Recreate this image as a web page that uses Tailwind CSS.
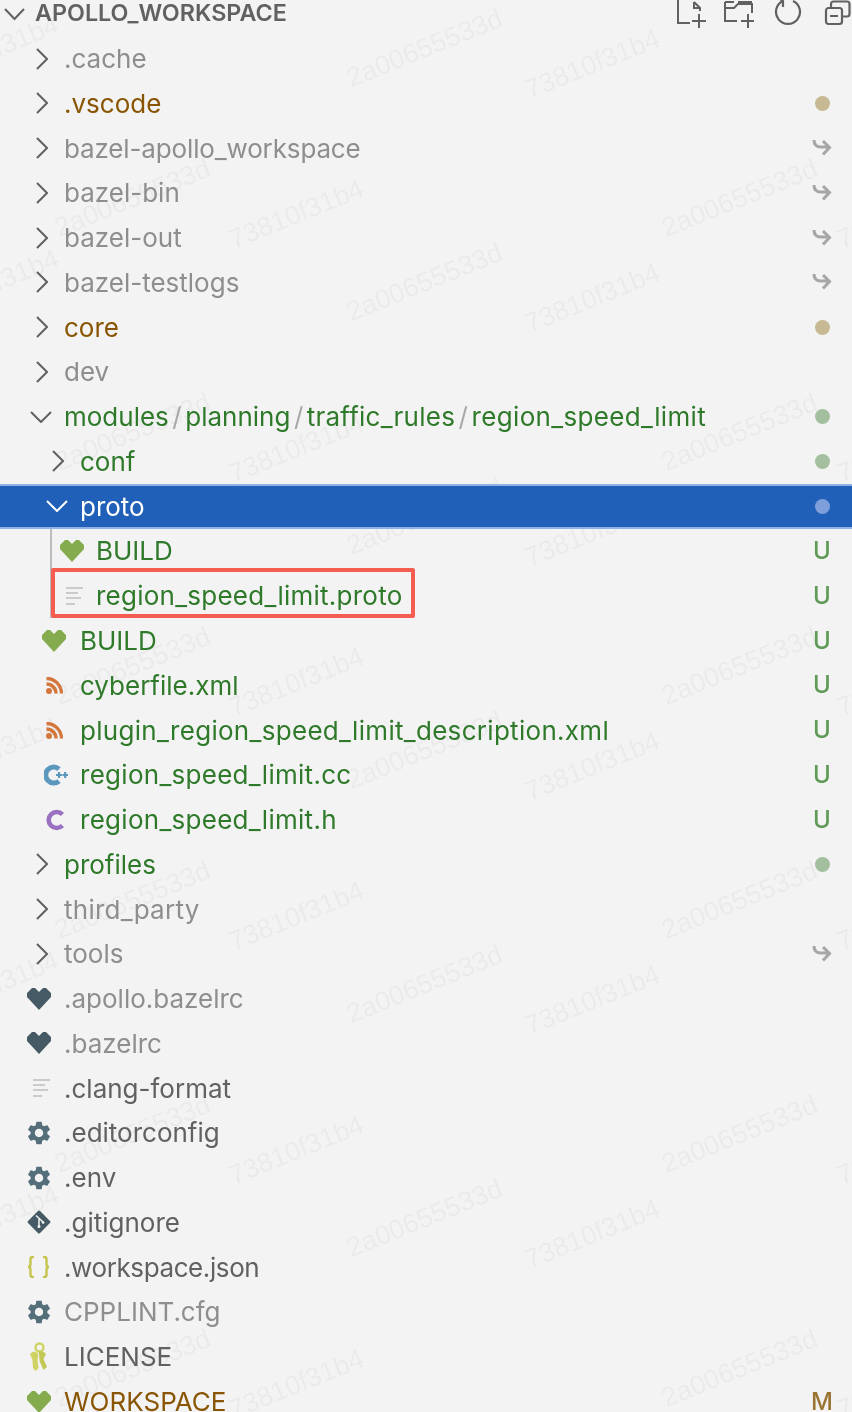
<!doctype html>
<html>
<head>
<meta charset="utf-8">
<script src="https://cdn.jsdelivr.net/npm/@tailwindcss/browser@4"></script>
</head>
<body class="bg-[#f3f3f3]">
<div class="relative w-[852px] h-[1412px] overflow-hidden bg-[#f3f3f3] font-['Inter',sans-serif] text-[26px] text-[#616161] blur-[0.5px]">

  <!-- watermark -->
  <div class="absolute inset-0 font-['Liberation_Sans',sans-serif] text-[27px] text-black/[0.035] whitespace-nowrap">
    <span class="absolute left-[-80px] top-[30px] -rotate-[22deg]">73810f31b4</span>
    <span class="absolute left-[342px] top-[28px] -rotate-[22deg]">2a00655533d</span>
    <span class="absolute left-[521px] top-[44px] -rotate-[22deg]">73810f31b4</span>
    <span class="absolute left-[50px] top-[178px] -rotate-[22deg]">2a00655533d</span>
    <span class="absolute left-[225px] top-[194px] -rotate-[22deg]">73810f31b4</span>
    <span class="absolute left-[657px] top-[178px] -rotate-[22deg]">2a00655533d</span>
    <span class="absolute left-[833px] top-[194px] -rotate-[22deg]">73810f31b4</span>
    <span class="absolute left-[-80px] top-[264px] -rotate-[22deg]">73810f31b4</span>
    <span class="absolute left-[342px] top-[262px] -rotate-[22deg]">2a00655533d</span>
    <span class="absolute left-[521px] top-[278px] -rotate-[22deg]">73810f31b4</span>
    <span class="absolute left-[50px] top-[412px] -rotate-[22deg]">2a00655533d</span>
    <span class="absolute left-[225px] top-[428px] -rotate-[22deg]">73810f31b4</span>
    <span class="absolute left-[657px] top-[412px] -rotate-[22deg]">2a00655533d</span>
    <span class="absolute left-[833px] top-[428px] -rotate-[22deg]">73810f31b4</span>
    <span class="absolute left-[-80px] top-[498px] -rotate-[22deg]">73810f31b4</span>
    <span class="absolute left-[342px] top-[496px] -rotate-[22deg]">2a00655533d</span>
    <span class="absolute left-[521px] top-[512px] -rotate-[22deg]">73810f31b4</span>
    <span class="absolute left-[50px] top-[646px] -rotate-[22deg]">2a00655533d</span>
    <span class="absolute left-[225px] top-[662px] -rotate-[22deg]">73810f31b4</span>
    <span class="absolute left-[657px] top-[646px] -rotate-[22deg]">2a00655533d</span>
    <span class="absolute left-[833px] top-[662px] -rotate-[22deg]">73810f31b4</span>
    <span class="absolute left-[-80px] top-[732px] -rotate-[22deg]">73810f31b4</span>
    <span class="absolute left-[342px] top-[730px] -rotate-[22deg]">2a00655533d</span>
    <span class="absolute left-[521px] top-[746px] -rotate-[22deg]">73810f31b4</span>
    <span class="absolute left-[50px] top-[880px] -rotate-[22deg]">2a00655533d</span>
    <span class="absolute left-[225px] top-[896px] -rotate-[22deg]">73810f31b4</span>
    <span class="absolute left-[657px] top-[880px] -rotate-[22deg]">2a00655533d</span>
    <span class="absolute left-[833px] top-[896px] -rotate-[22deg]">73810f31b4</span>
    <span class="absolute left-[-80px] top-[966px] -rotate-[22deg]">73810f31b4</span>
    <span class="absolute left-[342px] top-[964px] -rotate-[22deg]">2a00655533d</span>
    <span class="absolute left-[521px] top-[980px] -rotate-[22deg]">73810f31b4</span>
    <span class="absolute left-[50px] top-[1114px] -rotate-[22deg]">2a00655533d</span>
    <span class="absolute left-[225px] top-[1130px] -rotate-[22deg]">73810f31b4</span>
    <span class="absolute left-[657px] top-[1114px] -rotate-[22deg]">2a00655533d</span>
    <span class="absolute left-[833px] top-[1130px] -rotate-[22deg]">73810f31b4</span>
    <span class="absolute left-[-80px] top-[1200px] -rotate-[22deg]">73810f31b4</span>
    <span class="absolute left-[342px] top-[1198px] -rotate-[22deg]">2a00655533d</span>
    <span class="absolute left-[521px] top-[1214px] -rotate-[22deg]">73810f31b4</span>
    <span class="absolute left-[50px] top-[1348px] -rotate-[22deg]">2a00655533d</span>
    <span class="absolute left-[225px] top-[1364px] -rotate-[22deg]">73810f31b4</span>
    <span class="absolute left-[657px] top-[1348px] -rotate-[22deg]">2a00655533d</span>
    <span class="absolute left-[833px] top-[1364px] -rotate-[22deg]">73810f31b4</span>
  </div>

  <div class="relative flex flex-col mt-[-8.6px]">
    <!-- header -->
    <div class="flex items-center h-[44.77px] shrink-0 pl-[4px]">
      <svg class="w-[31px] h-[14px] shrink-0" viewBox="0 0 31 14"><path d="M1 2 L10.5 12 L20 2" fill="none" stroke="#616161" stroke-width="2"/></svg>
      <span class="font-semibold text-[23.3px]">APOLLO_WORKSPACE</span>
      <div class="ml-auto flex items-center">
        <svg class="w-[30px] h-[30px]" viewBox="0 0 30 30" fill="none" stroke="#616161" stroke-width="2"><path d="M1 0 V24 H13 M17 3 V9 H23 M17 3 L23 9 V12 M15 22 H29 M22 15 V29"/></svg>
        <svg class="w-[30px] h-[30px] ml-[17px]" viewBox="0 0 30 30" fill="none" stroke="#616161" stroke-width="2"><path d="M1 3 V22 H13 M1 9 H10 L14 5 H28 V14 M1 3 H10 M14 3 H28 M17 22 H31 M24 15 V29"/></svg>
        <svg class="w-[30px] h-[30px] ml-[18px]" viewBox="0 0 30 30" fill="none" stroke="#616161" stroke-width="2.2"><path d="M11 2 A12 12 0 1 0 21 2 M5 -2 L11 2 L11 8" /></svg>
        <svg class="w-[30px] h-[30px] ml-[20px]" viewBox="0 0 30 30" fill="none" stroke="#616161" stroke-width="2.2"><rect x="4" y="9" width="16" height="16" rx="2.5"/><path d="M9 9 V5 A2.5 2.5 0 0 1 11.5 2.5 H25 A2.5 2.5 0 0 1 27.5 5 V15 A2.5 2.5 0 0 1 25 17.5 H20 M8 17 H16"/></svg>
      </div>
    </div>

    <div class="flex items-center h-[44.77px] shrink-0 pl-[28px] text-[#8e8e8e]">
      <div class="w-[36px] pl-[8px]"><svg class="w-[12px] h-[22px]" viewBox="0 0 12 22"><path d="M1 1 L11 11 L1 21" fill="none" stroke="#616161" stroke-width="2"/></svg></div><span>.cache</span>
    </div>
    <div class="flex items-center h-[44.77px] shrink-0 pl-[28px] text-[#895503]">
      <div class="w-[36px] pl-[8px]"><svg class="w-[12px] h-[22px]" viewBox="0 0 12 22"><path d="M1 1 L11 11 L1 21" fill="none" stroke="#616161" stroke-width="2"/></svg></div><span>.vscode</span>
      <div class="ml-auto w-[60px] flex justify-center"><div class="w-[15px] h-[15px] rounded-full bg-[#c8b995]"></div></div>
    </div>
    <div class="flex items-center h-[44.77px] shrink-0 pl-[28px] text-[#8e8e8e]">
      <div class="w-[36px] pl-[8px]"><svg class="w-[12px] h-[22px]" viewBox="0 0 12 22"><path d="M1 1 L11 11 L1 21" fill="none" stroke="#616161" stroke-width="2"/></svg></div><span class="tracking-[-0.14px]">bazel-apollo_workspace</span>
      <div class="ml-auto w-[60px] flex justify-center"><svg class="w-[20px] h-[18px]" viewBox="0 0 20 18" fill="none" stroke="#a6a6a6" stroke-width="3"><path d="M2 1 C2 6 5 8 9 8 H17 M11 2 L17.5 8.5 L11 15.5"/></svg></div>
    </div>
    <div class="flex items-center h-[44.77px] shrink-0 pl-[28px] text-[#8e8e8e]">
      <div class="w-[36px] pl-[8px]"><svg class="w-[12px] h-[22px]" viewBox="0 0 12 22"><path d="M1 1 L11 11 L1 21" fill="none" stroke="#616161" stroke-width="2"/></svg></div><span>bazel-bin</span>
      <div class="ml-auto w-[60px] flex justify-center"><svg class="w-[20px] h-[18px]" viewBox="0 0 20 18" fill="none" stroke="#a6a6a6" stroke-width="3"><path d="M2 1 C2 6 5 8 9 8 H17 M11 2 L17.5 8.5 L11 15.5"/></svg></div>
    </div>
    <div class="flex items-center h-[44.77px] shrink-0 pl-[28px] text-[#8e8e8e]">
      <div class="w-[36px] pl-[8px]"><svg class="w-[12px] h-[22px]" viewBox="0 0 12 22"><path d="M1 1 L11 11 L1 21" fill="none" stroke="#616161" stroke-width="2"/></svg></div><span>bazel-out</span>
      <div class="ml-auto w-[60px] flex justify-center"><svg class="w-[20px] h-[18px]" viewBox="0 0 20 18" fill="none" stroke="#a6a6a6" stroke-width="3"><path d="M2 1 C2 6 5 8 9 8 H17 M11 2 L17.5 8.5 L11 15.5"/></svg></div>
    </div>
    <div class="flex items-center h-[44.77px] shrink-0 pl-[28px] text-[#8e8e8e]">
      <div class="w-[36px] pl-[8px]"><svg class="w-[12px] h-[22px]" viewBox="0 0 12 22"><path d="M1 1 L11 11 L1 21" fill="none" stroke="#616161" stroke-width="2"/></svg></div><span>bazel-testlogs</span>
      <div class="ml-auto w-[60px] flex justify-center"><svg class="w-[20px] h-[18px]" viewBox="0 0 20 18" fill="none" stroke="#a6a6a6" stroke-width="3"><path d="M2 1 C2 6 5 8 9 8 H17 M11 2 L17.5 8.5 L11 15.5"/></svg></div>
    </div>
    <div class="flex items-center h-[44.77px] shrink-0 pl-[28px] text-[#895503]">
      <div class="w-[36px] pl-[8px]"><svg class="w-[12px] h-[22px]" viewBox="0 0 12 22"><path d="M1 1 L11 11 L1 21" fill="none" stroke="#616161" stroke-width="2"/></svg></div><span>core</span>
      <div class="ml-auto w-[60px] flex justify-center"><div class="w-[15px] h-[15px] rounded-full bg-[#c8b995]"></div></div>
    </div>
    <div class="flex items-center h-[44.77px] shrink-0 pl-[28px] text-[#8e8e8e]">
      <div class="w-[36px] pl-[8px]"><svg class="w-[12px] h-[22px]" viewBox="0 0 12 22"><path d="M1 1 L11 11 L1 21" fill="none" stroke="#616161" stroke-width="2"/></svg></div><span>dev</span>
    </div>
    <div class="flex items-center h-[44.77px] shrink-0 pl-[28px] text-[#2f7a2a]">
      <div class="w-[36px] pl-[2px]"><svg class="w-[22px] h-[12px]" viewBox="0 0 22 12"><path d="M1 1 L11 11 L21 1" fill="none" stroke="#616161" stroke-width="2"/></svg></div>
      <span>modules</span><span class="text-[#a8a8a8] mx-[3.5px]">/</span><span>planning</span><span class="text-[#a8a8a8] mx-[3.5px]">/</span><span class="tracking-[0.23px]">traffic_rules</span><span class="text-[#a8a8a8] mx-[3.5px]">/</span><span class="tracking-[0.35px]">region_speed_limit</span>
      <div class="ml-auto w-[60px] flex justify-center"><div class="w-[15px] h-[15px] rounded-full bg-[#a4bf9d]"></div></div>
    </div>
    <div class="flex items-center h-[44.77px] shrink-0 pl-[44px] text-[#2f7a2a]">
      <div class="w-[36px] pl-[8px]"><svg class="w-[12px] h-[22px]" viewBox="0 0 12 22"><path d="M1 1 L11 11 L1 21" fill="none" stroke="#616161" stroke-width="2"/></svg></div><span>conf</span>
      <div class="ml-auto w-[60px] flex justify-center"><div class="w-[15px] h-[15px] rounded-full bg-[#a4bf9d]"></div></div>
    </div>
    <!-- selected -->
    <div class="flex items-center h-[44.77px] shrink-0 pl-[44px] text-white bg-[#2160b8] border-y-2 border-[#8fb1e6]">
      <div class="w-[36px] pl-[2px]"><svg class="w-[22px] h-[12px]" viewBox="0 0 22 12"><path d="M1 1 L11 11 L21 1" fill="none" stroke="#ffffff" stroke-width="2"/></svg></div><span>proto</span>
      <div class="ml-auto w-[60px] flex justify-center"><div class="w-[15px] h-[15px] rounded-full bg-[#7e9fdb]"></div></div>
    </div>
    <!-- nested children with indent guide -->
    <div class="flex flex-col ml-[50px] border-l-2 border-[#bdbdbd]">
      <div class="flex items-center h-[44.77px] shrink-0 pl-[8px] text-[#2f7a2a]">
        <div class="w-[36px]"><svg class="w-[24px] h-[22px]" viewBox="0 0 24 22"><path d="M0 5 L5 0 H8 L12 4 L16 0 H19 L24 5 V9 L12 22 L0 9 Z" fill="#84ac4e"/></svg></div><span>BUILD</span>
        <div class="ml-auto w-[60px] flex justify-center text-[24px] font-medium text-[#5f9a57]">U</div>
      </div>
      <div class="flex items-center h-[44.77px] shrink-0 pl-[8px] text-[#2f7a2a]">
        <div class="w-[36px] pl-[6px]"><svg class="w-[18px] h-[20px]" viewBox="0 0 18 20" stroke="#cbcbcb" stroke-width="2"><path d="M0 2 H17 M0 7 H12 M0 12 H15 M0 18 H9"/></svg></div><span class="tracking-[0.25px]">region_speed_limit.proto</span>
        <div class="ml-auto w-[60px] flex justify-center text-[24px] font-medium text-[#5f9a57]">U</div>
      </div>
    </div>
    <div class="flex items-center h-[44.77px] shrink-0 pl-[44px] text-[#2f7a2a]">
      <div class="w-[36px] -ml-[2px] mr-[2px]"><svg class="w-[24px] h-[22px]" viewBox="0 0 24 22"><path d="M0 5 L5 0 H8 L12 4 L16 0 H19 L24 5 V9 L12 22 L0 9 Z" fill="#84ac4e"/></svg></div><span>BUILD</span>
      <div class="ml-auto w-[60px] flex justify-center text-[24px] font-medium text-[#5f9a57]">U</div>
    </div>
    <div class="flex items-center h-[44.77px] shrink-0 pl-[44px] text-[#2f7a2a]">
      <div class="w-[36px] pl-[2px]"><svg class="w-[17px] h-[17px]" viewBox="0 0 17 17" fill="none" stroke="#d4773d" stroke-width="3.4"><circle cx="3" cy="14" r="3" fill="#d4773d" stroke="none"/><path d="M0.5 7 A9.5 9.5 0 0 1 10 16.5 M0.5 1.5 A15 15 0 0 1 15.5 16.5"/></svg></div><span>cyberfile.xml</span>
      <div class="ml-auto w-[60px] flex justify-center text-[24px] font-medium text-[#5f9a57]">U</div>
    </div>
    <div class="flex items-center h-[44.77px] shrink-0 pl-[44px] text-[#2f7a2a]">
      <div class="w-[36px] pl-[2px]"><svg class="w-[17px] h-[17px]" viewBox="0 0 17 17" fill="none" stroke="#d4773d" stroke-width="3.4"><circle cx="3" cy="14" r="3" fill="#d4773d" stroke="none"/><path d="M0.5 7 A9.5 9.5 0 0 1 10 16.5 M0.5 1.5 A15 15 0 0 1 15.5 16.5"/></svg></div><span class="tracking-[0.3px]">plugin_region_speed_limit_description.xml</span>
      <div class="ml-auto w-[60px] flex justify-center text-[24px] font-medium text-[#5f9a57]">U</div>
    </div>
    <div class="flex items-center h-[44.77px] shrink-0 pl-[44px] text-[#2f7a2a]">
      <div class="w-[36px]"><svg class="w-[24px] h-[22px]" viewBox="0 0 24 22" fill="none" stroke="#5c97bd"><path d="M15 5 A8 8 0 1 0 15 17" stroke-width="5"/><path d="M12 11 H18 M15 8 V14 M18.5 11 H24 M21.2 8 V14" stroke-width="2.2"/></svg></div><span class="tracking-[0.28px]">region_speed_limit.cc</span>
      <div class="ml-auto w-[60px] flex justify-center text-[24px] font-medium text-[#5f9a57]">U</div>
    </div>
    <div class="flex items-center h-[44.77px] shrink-0 pl-[44px] text-[#2f7a2a]">
      <div class="w-[36px] pl-[2px]"><svg class="w-[18px] h-[22px]" viewBox="0 0 18 22" fill="none" stroke="#9a70c0" stroke-width="4.6"><path d="M16.5 5.5 A8 8 0 1 0 16.5 16.5"/></svg></div><span class="tracking-[0.28px]">region_speed_limit.h</span>
      <div class="ml-auto w-[60px] flex justify-center text-[24px] font-medium text-[#5f9a57]">U</div>
    </div>
    <div class="flex items-center h-[44.77px] shrink-0 pl-[28px] text-[#2f7a2a]">
      <div class="w-[36px] pl-[8px]"><svg class="w-[12px] h-[22px]" viewBox="0 0 12 22"><path d="M1 1 L11 11 L1 21" fill="none" stroke="#616161" stroke-width="2"/></svg></div><span>profiles</span>
      <div class="ml-auto w-[60px] flex justify-center"><div class="w-[15px] h-[15px] rounded-full bg-[#a4bf9d]"></div></div>
    </div>
    <div class="flex items-center h-[44.77px] shrink-0 pl-[28px] text-[#8e8e8e]">
      <div class="w-[36px] pl-[8px]"><svg class="w-[12px] h-[22px]" viewBox="0 0 12 22"><path d="M1 1 L11 11 L1 21" fill="none" stroke="#616161" stroke-width="2"/></svg></div><span class="tracking-[0.25px]">third_party</span>
    </div>
    <div class="flex items-center h-[44.77px] shrink-0 pl-[28px] text-[#8e8e8e]">
      <div class="w-[36px] pl-[8px]"><svg class="w-[12px] h-[22px]" viewBox="0 0 12 22"><path d="M1 1 L11 11 L1 21" fill="none" stroke="#616161" stroke-width="2"/></svg></div><span>tools</span>
      <div class="ml-auto w-[60px] flex justify-center"><svg class="w-[20px] h-[18px]" viewBox="0 0 20 18" fill="none" stroke="#a6a6a6" stroke-width="3"><path d="M2 1 C2 6 5 8 9 8 H17 M11 2 L17.5 8.5 L11 15.5"/></svg></div>
    </div>
    <div class="flex items-center h-[44.77px] shrink-0 pl-[27px] text-[#8e8e8e]">
      <div class="w-[37px]"><svg class="w-[24px] h-[22px]" viewBox="0 0 24 22"><path d="M0 5 L5 0 H8 L12 4 L16 0 H19 L24 5 V9 L12 22 L0 9 Z" fill="#455a64"/></svg></div><span>.apollo.bazelrc</span>
    </div>
    <div class="flex items-center h-[44.77px] shrink-0 pl-[27px] text-[#8e8e8e]">
      <div class="w-[37px]"><svg class="w-[24px] h-[22px]" viewBox="0 0 24 22"><path d="M0 5 L5 0 H8 L12 4 L16 0 H19 L24 5 V9 L12 22 L0 9 Z" fill="#455a64"/></svg></div><span>.bazelrc</span>
    </div>
    <div class="flex items-center h-[44.77px] shrink-0 pl-[27px]">
      <div class="w-[37px] pl-[6px]"><svg class="w-[18px] h-[20px]" viewBox="0 0 18 20" stroke="#cbcbcb" stroke-width="2"><path d="M0 2 H17 M0 7 H12 M0 12 H15 M0 18 H9"/></svg></div><span>.clang-format</span>
    </div>
    <div class="flex items-center h-[44.77px] shrink-0 pl-[27px]">
      <div class="w-[37px] -ml-[2px] mr-[2px]"><svg class="w-[28px] h-[28px]" viewBox="0 0 24 24" fill="#546e7a"><path d="M19.14 12.94c.04-.3.06-.61.06-.94 0-.32-.02-.64-.07-.94l2.03-1.58c.18-.14.23-.41.12-.61l-1.92-3.32c-.12-.22-.37-.29-.59-.22l-2.39.96c-.5-.38-1.03-.7-1.62-.94l-.36-2.54c-.04-.24-.24-.41-.48-.41h-3.84c-.24 0-.43.17-.47.41l-.36 2.54c-.59.24-1.13.57-1.62.94l-2.39-.96c-.22-.08-.47 0-.59.22L2.74 8.87c-.12.21-.08.47.12.61l2.03 1.58c-.05.3-.09.63-.09.94s.02.64.07.94l-2.03 1.58c-.18.14-.23.41-.12.61l1.92 3.32c.12.22.37.29.59.22l2.39-.96c.5.38 1.03.7 1.62.94l.36 2.54c.05.24.24.41.48.41h3.84c.24 0 .44-.17.47-.41l.36-2.54c.59-.24 1.13-.56 1.62-.94l2.39.96c.22.08.47 0 .59-.22l1.92-3.32c.12-.22.07-.47-.12-.61l-2.01-1.58zM12 15.6c-1.98 0-3.6-1.62-3.6-3.6s1.62-3.6 3.6-3.6 3.6 1.62 3.6 3.6-1.62 3.6-3.6 3.6z"/></svg></div><span>.editorconfig</span>
    </div>
    <div class="flex items-center h-[44.77px] shrink-0 pl-[27px]">
      <div class="w-[37px] -ml-[2px] mr-[2px]"><svg class="w-[28px] h-[28px]" viewBox="0 0 24 24" fill="#546e7a"><path d="M19.14 12.94c.04-.3.06-.61.06-.94 0-.32-.02-.64-.07-.94l2.03-1.58c.18-.14.23-.41.12-.61l-1.92-3.32c-.12-.22-.37-.29-.59-.22l-2.39.96c-.5-.38-1.03-.7-1.62-.94l-.36-2.54c-.04-.24-.24-.41-.48-.41h-3.84c-.24 0-.43.17-.47.41l-.36 2.54c-.59.24-1.13.57-1.62.94l-2.39-.96c-.22-.08-.47 0-.59.22L2.74 8.87c-.12.21-.08.47.12.61l2.03 1.58c-.05.3-.09.63-.09.94s.02.64.07.94l-2.03 1.58c-.18.14-.23.41-.12.61l1.92 3.32c.12.22.37.29.59.22l2.39-.96c.5.38 1.03.7 1.62.94l.36 2.54c.05.24.24.41.48.41h3.84c.24 0 .44-.17.47-.41l.36-2.54c.59-.24 1.13-.56 1.62-.94l2.39.96c.22.08.47 0 .59-.22l1.92-3.32c.12-.22.07-.47-.12-.61l-2.01-1.58zM12 15.6c-1.98 0-3.6-1.62-3.6-3.6s1.62-3.6 3.6-3.6 3.6 1.62 3.6 3.6-1.62 3.6-3.6 3.6z"/></svg></div><span>.env</span>
    </div>
    <div class="flex items-center h-[44.77px] shrink-0 pl-[27px]">
      <div class="w-[37px]"><svg class="w-[24px] h-[24px]" viewBox="0 0 24 24"><rect x="3.5" y="3.5" width="17" height="17" rx="1.5" transform="rotate(45 12 12)" fill="#455a64"/><path d="M9 5.5 L17 13 M12 8.5 V16" stroke="#f3f3f3" stroke-width="1.5" fill="none"/><circle cx="12" cy="16.5" r="1.5" fill="#f3f3f3"/><circle cx="16" cy="12.5" r="1.3" fill="#f3f3f3"/></svg></div><span>.gitignore</span>
    </div>
    <div class="flex items-center h-[44.77px] shrink-0 pl-[27px]">
      <div class="w-[37px]"><svg class="w-[23px] h-[22px]" viewBox="0 0 23 22" fill="none" stroke="#c5c44f" stroke-width="2.4"><path d="M7 1 H5.5 Q3.5 1 3.5 3 V8 Q3.5 11 1 11 Q3.5 11 3.5 14 V19 Q3.5 21 5.5 21 H7 M16 1 H17.5 Q19.5 1 19.5 3 V8 Q19.5 11 22 11 Q19.5 11 19.5 14 V19 Q19.5 21 17.5 21 H16"/></svg></div><span class="tracking-[-0.4px]">.workspace.json</span>
    </div>
    <div class="flex items-center h-[44.77px] shrink-0 pl-[27px] text-[#8e8e8e]">
      <div class="w-[37px] -ml-[2px] mr-[2px]"><svg class="w-[28px] h-[28px]" viewBox="0 0 24 24" fill="#546e7a"><path d="M19.14 12.94c.04-.3.06-.61.06-.94 0-.32-.02-.64-.07-.94l2.03-1.58c.18-.14.23-.41.12-.61l-1.92-3.32c-.12-.22-.37-.29-.59-.22l-2.39.96c-.5-.38-1.03-.7-1.62-.94l-.36-2.54c-.04-.24-.24-.41-.48-.41h-3.84c-.24 0-.43.17-.47.41l-.36 2.54c-.59.24-1.13.57-1.62.94l-2.39-.96c-.22-.08-.47 0-.59.22L2.74 8.87c-.12.21-.08.47.12.61l2.03 1.58c-.05.3-.09.63-.09.94s.02.64.07.94l-2.03 1.58c-.18.14-.23.41-.12.61l1.92 3.32c.12.22.37.29.59.22l2.39-.96c.5.38 1.03.7 1.62.94l.36 2.54c.05.24.24.41.48.41h3.84c.24 0 .44-.17.47-.41l.36-2.54c.59-.24 1.13-.56 1.62-.94l2.39.96c.22.08.47 0 .59-.22l1.92-3.32c.12-.22.07-.47-.12-.61l-2.01-1.58zM12 15.6c-1.98 0-3.6-1.62-3.6-3.6s1.62-3.6 3.6-3.6 3.6 1.62 3.6 3.6-1.62 3.6-3.6 3.6z"/></svg></div><span>CPPLINT.cfg</span>
    </div>
    <div class="flex items-center h-[44.77px] shrink-0 pl-[27px]">
      <div class="w-[37px] pl-[3px]"><svg class="w-[17px] h-[29px]" viewBox="0 0 17 29"><circle cx="9.5" cy="5.5" r="4" fill="none" stroke="#cfd364" stroke-width="2.4"/><path d="M0 12 Q4 7 8.5 12 L7.5 18 L8.5 26 L5.5 29 L3 26 L2.5 18 Z" fill="#cfd364"/><path d="M9 10 Q13 8 16 12 L13.5 17 L17 25 L13.5 28 L9.5 19 Z" fill="#c2c857"/></svg></div><span>LICENSE</span>
    </div>
    <div class="flex items-center h-[44.77px] shrink-0 pl-[27px] text-[#895503]">
      <div class="w-[37px]"><svg class="w-[24px] h-[22px]" viewBox="0 0 24 22"><path d="M0 5 L5 0 H8 L12 4 L16 0 H19 L24 5 V9 L12 22 L0 9 Z" fill="#84ac4e"/></svg></div><span>WORKSPACE</span>
      <div class="ml-auto w-[60px] flex justify-center text-[24px] font-medium text-[#9a7433]">M</div>
    </div>
  </div>

  <!-- annotation box -->
  <div class="absolute left-[51px] top-[568px] w-[364px] h-[50px] border-[4px] border-[#f45d50] rounded-[2px]"></div>
</div>
</body>
</html>
